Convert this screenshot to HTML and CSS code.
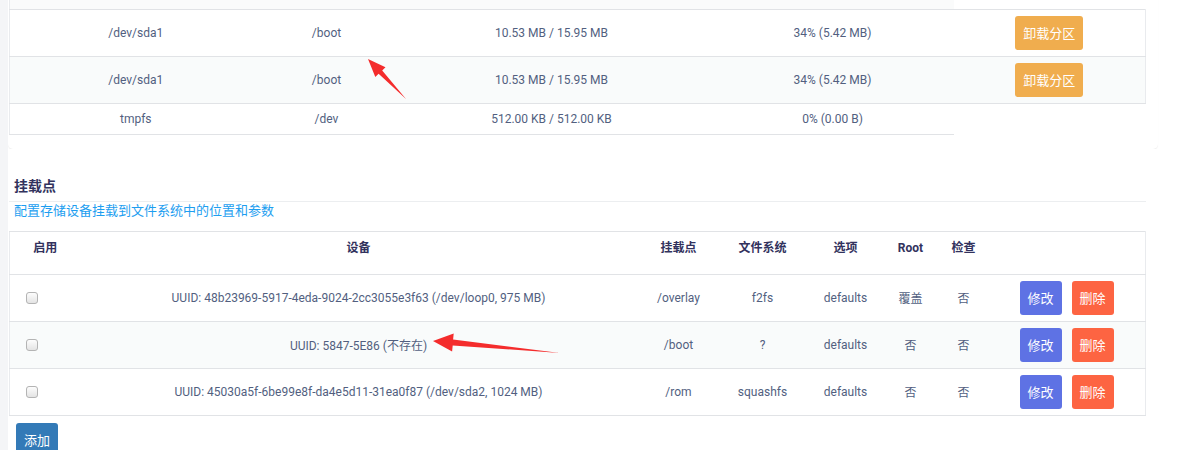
FILE: index.html
```
<!DOCTYPE html>
<html lang="zh-CN">
<head>
    <meta charset="UTF-8">
    <title>挂载点</title>
    <link rel="stylesheet" href="styles.css">
</head>
<body>
    <div class="card card-mounted">
        <table class="table table-mounted">
            <colgroup>
                <col style="width:252px"><col style="width:130px"><col style="width:320px"><col style="width:242px"><col style="width:192px">
            </colgroup>
            <tr class="head">
                <th>文件系统</th><th>挂载点</th><th>可用</th><th>已用</th>
            </tr>
            <tr>
                <td>/dev/sda1</td><td>/boot</td><td>10.53 MB / 15.95 MB</td><td>34% (5.42 MB)</td>
                <td class="last"><button class="btn btn-warning">卸载分区</button></td>
            </tr>
            <tr class="alt">
                <td>/dev/sda1</td><td>/boot</td><td>10.53 MB / 15.95 MB</td><td>34% (5.42 MB)</td>
                <td class="last"><button class="btn btn-warning">卸载分区</button></td>
            </tr>
            <tr class="short">
                <td>tmpfs</td><td>/dev</td><td>512.00 KB / 512.00 KB</td><td>0% (0.00 B)</td>
            </tr>
        </table>
    </div>

    <div class="card card-mounts">
        <div class="legend">
            <h3>挂载点</h3>
        </div>
        <div class="descr">配置存储设备挂载到文件系统中的位置和参数</div>

        <table class="table table-mounts">
            <colgroup>
                <col style="width:71px"><col style="width:556px"><col style="width:84px"><col style="width:84px"><col style="width:82px"><col style="width:48px"><col style="width:58px"><col style="width:153px">
            </colgroup>
            <tr class="head">
                <th>启用</th><th>设备</th><th>挂载点</th><th>文件系统</th><th>选项</th><th>Root</th><th>检查</th><th class="last"></th>
            </tr>
            <tr>
                <td class="check"><input type="checkbox"></td>
                <td>UUID: 48b23969-5917-4eda-9024-2cc3055e3f63 (/dev/loop0, 975 MB)</td>
                <td>/overlay</td><td>f2fs</td><td>defaults</td><td>覆盖</td><td>否</td>
                <td class="last actions"><button class="btn btn-edit">修改</button><button class="btn btn-remove">删除</button></td>
            </tr>
            <tr class="alt">
                <td class="check"><input type="checkbox"></td>
                <td>UUID: 5847-5E86 (不存在)</td>
                <td>/boot</td><td>?</td><td>defaults</td><td>否</td><td>否</td>
                <td class="last actions"><button class="btn btn-edit">修改</button><button class="btn btn-remove">删除</button></td>
            </tr>
            <tr>
                <td class="check"><input type="checkbox"></td>
                <td>UUID: 45030a5f-6be99e8f-da4e5d11-31ea0f87 (/dev/sda2, 1024 MB)</td>
                <td>/rom</td><td>squashfs</td><td>defaults</td><td>否</td><td>否</td>
                <td class="last actions"><button class="btn btn-edit">修改</button><button class="btn btn-remove">删除</button></td>
            </tr>
        </table>

        <button class="btn btn-add">添加</button>
    </div>

    <!-- red arrows drawn over the screenshot -->
    <svg class="marks" width="1177" height="450" viewBox="0 0 1177 450">
        <polygon points="368,59 385.5,67.3 382.2,70.4 406,99 378.6,73.8 375.3,76.9" fill="#f42c2c"/>
        <polygon points="433,341 453.7,333.6 453.1,339.6 560,353 452.7,345.4 452.1,351.6" fill="#f42c2c"/>
    </svg>
</body>
</html>
```

FILE: styles.css
```
body {
    margin: 0;
    min-height: 450px;
    background: #fff;
    border-left: 8px solid #f4f5f7;
    font-family: Roboto, "Noto Sans CJK SC", sans-serif;
    font-size: 12px;
    color: #525f7f;
    position: relative;
    overflow: hidden;
}
.card {
    background: #fff;
    width: 1150px;
}
.card-mounted {
    margin-top: -31px;
    padding: 0 13px 14px 1px;
    box-sizing: border-box;
    border-radius: 0 0 5px 5px;
    box-shadow: 0 1px 1px rgba(0, 0, 0, 0.07);
}
.table {
    border-collapse: collapse;
    table-layout: fixed;
    width: 1137px;
}
.table td, .table th {
    border-top: 1px solid #e1e3e6;
    border-bottom: 1px solid #e1e3e6;
    text-align: center;
    vertical-align: middle;
    padding: 0 8px;
    white-space: nowrap;
}
.table td:first-child, .table th:first-child {
    border-left: 1px solid #e9ebee;
}
.table .last {
    border-right: 1px solid #e9ebee;
}
.table th {
    font-weight: bold;
    color: #32325d;
    line-height: 16px;
}
.table tr.alt td {
    background: #f9fbfb;
}
.table-mounted tr.head th {
    height: 40px;
    vertical-align: bottom;
    padding-bottom: 12px;
    border-top: none;
    background: #fafbfb;
    box-sizing: border-box;
}
.table-mounted td {
    height: 46px;
}
.table-mounted tr.short td {
    height: 30px;
}
.btn {
    font-family: Roboto, "Noto Sans CJK SC", sans-serif;
    font-size: 13px;
    color: #fff;
    border: none;
    border-radius: 3px;
    height: 34px;
    padding: 0 8px;
    cursor: pointer;
}
.btn-warning {
    background: #f0ad4e;
}
.btn-edit {
    background: #5e72e4;
}
.btn-remove {
    background: #fd6442;
    margin-left: 10px;
}
.btn-add {
    background: #337ab7;
    margin: 7px 0 0 7px;
}
.card-mounts {
    padding: 27px 12px 0 1px;
}
.legend {
    border-bottom: 1px solid #eceef0;
    padding: 0 0 5px 5px;
    width: 1132px;
}
.legend h3 {
    margin: 0;
    font-size: 14px;
    line-height: 20px;
    color: #32325d;
}
.descr {
    padding-left: 5px;
    font-size: 13px;
    line-height: 18px;
    color: #1d9ef0;
    margin-bottom: 11px;
}
.table-mounts th {
    height: 43px;
    box-sizing: border-box;
    padding: 8px 8px 18px;
}
.table-mounts td {
    height: 46px;
}
.table-mounts td.check {
    text-align: left;
    padding-left: 16px;
}
.check input {
    appearance: none;
    -webkit-appearance: none;
    margin: 0;
    width: 12px;
    height: 12px;
    border: 1px solid #b4b4b4;
    border-radius: 3px;
    background: linear-gradient(#fdfdfd, #e4e4e4);
    vertical-align: middle;
}
.table-mounts td.actions {
    text-align: left;
    padding-left: 27px;
}
.marks {
    position: absolute;
    left: -8px;
    top: 0;
    pointer-events: none;
}
```
